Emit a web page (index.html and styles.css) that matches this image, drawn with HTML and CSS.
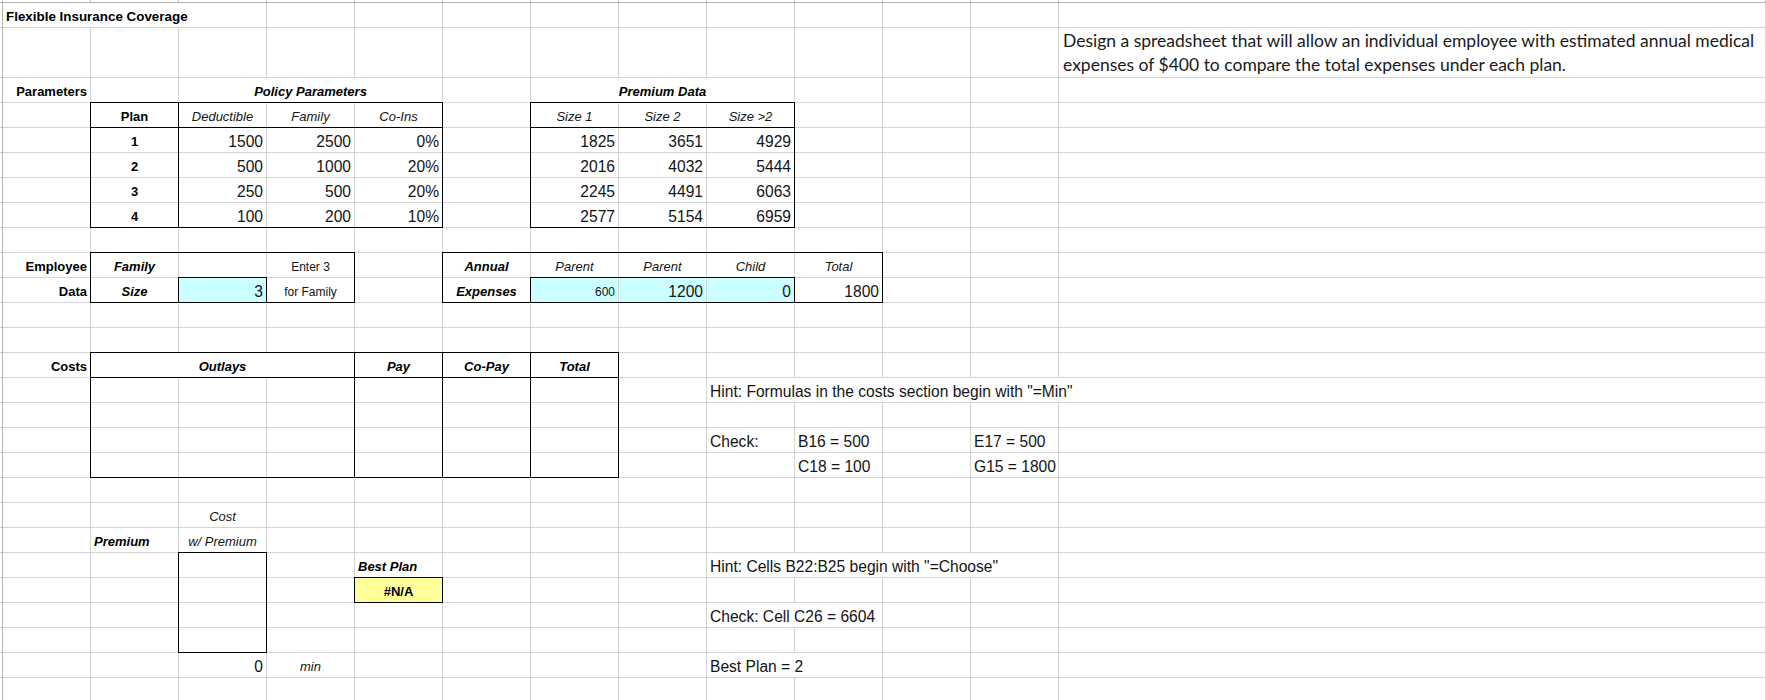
FILE: index.html
```html
<!DOCTYPE html>
<html lang="en">
<head>
<meta charset="utf-8">
<title>Flexible Insurance Coverage</title>
<link rel="stylesheet" href="styles.css">
</head>
<body>
<div class="sheet">
  <div class="cells">
    <!-- sliver of the row above -->
    <div class="top"></div><div class="top"></div><div class="top"></div><div class="top"></div><div class="top"></div><div class="top"></div><div class="top"></div><div class="top"></div><div class="top"></div><div class="top"></div><div class="top"></div><div class="top"></div><div class="top"></div><div class="top"></div>
    <!-- row 1 -->
    <div class="s"></div><div class="b title w3">Flexible Insurance Coverage</div><div></div><div></div><div></div><div></div><div></div><div></div><div></div><div></div><div></div><div></div>
    <!-- row 2 -->
    <div class="s"></div><div></div><div></div><div></div><div></div><div></div><div></div><div></div><div></div><div></div><div></div><div></div><div></div><div class="desc">Design a spreadsheet that will allow an individual employee with estimated annual medical<br>expenses of $400 to compare the total expenses under each plan.</div>
    <!-- row 3 -->
    <div class="s"></div><div class="b r">Parameters</div><div></div><div class="bi ctr w3">Policy Parameters</div><div></div><div class="bi ctr w3">Premium Data</div><div></div><div></div><div></div><div></div>
    <!-- row 4 -->
    <div class="s"></div><div></div><div class="b ctr">Plan</div><div class="i ctr">Deductible</div><div class="i ctr">Family</div><div class="i ctr">Co-Ins</div><div></div><div class="i ctr">Size 1</div><div class="i ctr">Size 2</div><div class="i ctr">Size &gt;2</div><div></div><div></div><div></div><div></div>
    <!-- row 5 -->
    <div class="s"></div><div></div><div class="b ctr">1</div><div class="r">1500</div><div class="r">2500</div><div class="r">0%</div><div></div><div class="r">1825</div><div class="r">3651</div><div class="r">4929</div><div></div><div></div><div></div><div></div>
    <!-- row 6 -->
    <div class="s"></div><div></div><div class="b ctr">2</div><div class="r">500</div><div class="r">1000</div><div class="r">20%</div><div></div><div class="r">2016</div><div class="r">4032</div><div class="r">5444</div><div></div><div></div><div></div><div></div>
    <!-- row 7 -->
    <div class="s"></div><div></div><div class="b ctr">3</div><div class="r">250</div><div class="r">500</div><div class="r">20%</div><div></div><div class="r">2245</div><div class="r">4491</div><div class="r">6063</div><div></div><div></div><div></div><div></div>
    <!-- row 8 -->
    <div class="s"></div><div></div><div class="b ctr">4</div><div class="r">100</div><div class="r">200</div><div class="r">10%</div><div></div><div class="r">2577</div><div class="r">5154</div><div class="r">6959</div><div></div><div></div><div></div><div></div>
    <!-- row 9 -->
    <div class="s"></div><div></div><div></div><div></div><div></div><div></div><div></div><div></div><div></div><div></div><div></div><div></div><div></div><div></div>
    <!-- row 10 -->
    <div class="s"></div><div class="b r">Employee</div><div class="bi ctr">Family</div><div></div><div class="sm ctr">Enter 3</div><div></div><div class="bi ctr">Annual</div><div class="i ctr">Parent</div><div class="i ctr">Parent</div><div class="i ctr">Child</div><div class="i ctr">Total</div><div></div><div></div><div></div>
    <!-- row 11 -->
    <div class="s"></div><div class="b r">Data</div><div class="bi ctr">Size</div><div class="r input">3</div><div class="sm ctr">for Family</div><div></div><div class="bi ctr">Expenses</div><div class="r input sm">600</div><div class="r input">1200</div><div class="r input">0</div><div class="r">1800</div><div></div><div></div><div></div>
    <!-- row 12 -->
    <div class="s"></div><div></div><div></div><div></div><div></div><div></div><div></div><div></div><div></div><div></div><div></div><div></div><div></div><div></div>
    <!-- row 13 -->
    <div class="s"></div><div></div><div></div><div></div><div></div><div></div><div></div><div></div><div></div><div></div><div></div><div></div><div></div><div></div>
    <!-- row 14 -->
    <div class="s"></div><div class="b r">Costs</div><div class="bi ctr w3">Outlays</div><div class="bi ctr">Pay</div><div class="bi ctr">Co-Pay</div><div class="bi ctr">Total</div><div></div><div></div><div></div><div></div><div></div><div></div>
    <!-- row 15 -->
    <div class="s"></div><div></div><div></div><div></div><div></div><div></div><div></div><div></div><div></div><div class="w5">Hint: Formulas in the costs section begin with "=Min"</div>
    <!-- row 16 -->
    <div class="s"></div><div></div><div></div><div></div><div></div><div></div><div></div><div></div><div></div><div></div><div></div><div></div><div></div><div></div>
    <!-- row 17 -->
    <div class="s"></div><div></div><div></div><div></div><div></div><div></div><div></div><div></div><div></div><div>Check:</div><div>B16 = 500</div><div></div><div>E17 = 500</div><div></div>
    <!-- row 18 -->
    <div class="s"></div><div></div><div></div><div></div><div></div><div></div><div></div><div></div><div></div><div></div><div>C18 = 100</div><div></div><div>G15 = 1800</div><div></div>
    <!-- row 19 -->
    <div class="s"></div><div></div><div></div><div></div><div></div><div></div><div></div><div></div><div></div><div></div><div></div><div></div><div></div><div></div>
    <!-- row 20 -->
    <div class="s"></div><div></div><div></div><div class="i ctr">Cost</div><div></div><div></div><div></div><div></div><div></div><div></div><div></div><div></div><div></div><div></div>
    <!-- row 21 -->
    <div class="s"></div><div></div><div class="bi">Premium</div><div class="i ctr">w/ Premium</div><div></div><div></div><div></div><div></div><div></div><div></div><div></div><div></div><div></div><div></div>
    <!-- row 22 -->
    <div class="s"></div><div></div><div></div><div></div><div></div><div class="bi">Best Plan</div><div></div><div></div><div></div><div class="w4">Hint: Cells B22:B25 begin with "=Choose"</div><div></div>
    <!-- row 23 -->
    <div class="s"></div><div></div><div></div><div></div><div></div><div class="b ctr na">#N/A</div><div></div><div></div><div></div><div></div><div></div><div></div><div></div><div></div>
    <!-- row 24 -->
    <div class="s"></div><div></div><div></div><div></div><div></div><div></div><div></div><div></div><div></div><div class="w2">Check: Cell C26 = 6604</div><div></div><div></div><div></div>
    <!-- row 25 -->
    <div class="s"></div><div></div><div></div><div></div><div></div><div></div><div></div><div></div><div></div><div></div><div></div><div></div><div></div><div></div>
    <!-- row 26 -->
    <div class="s"></div><div></div><div></div><div class="r">0</div><div class="i ctr">min</div><div></div><div></div><div></div><div></div><div class="w2">Best Plan = 2</div><div></div><div></div><div></div>
    <!-- row 27 -->
    <div class="s"></div><div></div><div></div><div></div><div></div><div></div><div></div><div></div><div></div><div></div><div></div><div></div><div></div><div></div>
  </div>
  <div class="lines">
    <div class="box pol-box"></div>
    <div class="hl pol-head"></div>
    <div class="vl pol-plan"></div>
    <div class="box prem-box"></div>
    <div class="hl prem-head"></div>
    <div class="box emp-box"></div>
    <div class="box size-box"></div>
    <div class="box exp-box"></div>
    <div class="box exp-input"></div>
    <div class="box cost-box"></div>
    <div class="hl cost-head"></div>
    <div class="vl cost-outlays"></div>
    <div class="vl cost-pay"></div>
    <div class="vl cost-copay"></div>
    <div class="box wp-box"></div>
    <div class="box best-box"></div>
  </div>
</div>
</body>
</html>
```

FILE: styles.css
```css
html, body {
  margin: 0;
  padding: 0;
  background: #fff;
  overflow: hidden;
}

.sheet {
  display: grid;
  width: 1766px;
}

.cells,
.lines {
  grid-area: 1 / 1;
  display: grid;
  grid-template-columns: 2px repeat(12, 87px) 706px;
  grid-template-rows: 2px 24px 49px repeat(25, 24px);
  gap: 1px;
  padding-right: 1px;
}

.cells {
  background: #d4d4d4;
}

.cells > div {
  background: #fff;
  display: flex;
  align-items: flex-end;
  padding: 0 3px 1px;
  min-width: 0;
  overflow: hidden;
  white-space: nowrap;
  font-family: "Liberation Sans", Arial, sans-serif;
  font-size: 15.6px;
  line-height: 1.15;
  color: #141414;
}

.cells > .top {
  padding: 0;
  box-shadow: 0 1px 0 #b3b3b3, 1px 1px 0 #b3b3b3;
}

.cells > .s {
  padding: 0;
  box-shadow: 1px 0 0 #b3b3b3, 1px 1px 0 #b3b3b3;
}

.cells > .b {
  font-weight: bold;
  font-size: 13px;
  padding-bottom: 2px;
  color: #000;
}

.cells > .title {
  font-size: 13.4px;
  padding-bottom: 2.5px;
}

.cells > .i {
  font-style: italic;
  font-size: 13px;
  padding-bottom: 2px;
}

.cells > .bi {
  font-weight: bold;
  font-style: italic;
  font-size: 13px;
  padding-bottom: 2px;
  color: #000;
}

.cells > .sm {
  font-size: 12px;
  padding-bottom: 2px;
}

.cells > .r {
  justify-content: flex-end;
}

.cells > .ctr {
  justify-content: center;
}

.cells > .input {
  background: #ccffff;
}

.cells > .na {
  background: #ffff99;
}

.cells > .desc {
  align-items: flex-start;
  padding: 1px 3px 0 4px;
  font-family: Lato, "Open Sans", sans-serif;
  font-size: 17.5px;
  line-height: 24px;
  color: #1a1a1a;
}

.w2 { grid-column: span 2; }
.w3 { grid-column: span 3; }
.w4 { grid-column: span 4; }
.w5 { grid-column: span 5; }

/* black cell borders, drawn on the gridline gaps */
.lines > div {
  pointer-events: none;
}

.box {
  border: 1px solid #000;
  margin: -1px;
}

.hl {
  border-bottom: 1px solid #000;
  margin: 0 -1px -1px;
}

.vl {
  border-right: 1px solid #000;
  margin: -1px -1px -1px 0;
}

.pol-box { grid-column: 3 / 7; grid-row: 5 / 10; }
.pol-head { grid-column: 3 / 7; grid-row: 5 / 6; }
.pol-plan { grid-column: 3 / 4; grid-row: 5 / 10; }
.prem-box { grid-column: 8 / 11; grid-row: 5 / 10; }
.prem-head { grid-column: 8 / 11; grid-row: 5 / 6; }
.emp-box { grid-column: 3 / 6; grid-row: 11 / 13; }
.size-box { grid-column: 4 / 5; grid-row: 12 / 13; }
.exp-box { grid-column: 7 / 12; grid-row: 11 / 13; }
.exp-input { grid-column: 8 / 11; grid-row: 12 / 13; }
.cost-box { grid-column: 3 / 9; grid-row: 15 / 20; }
.cost-head { grid-column: 3 / 9; grid-row: 15 / 16; }
.cost-outlays { grid-column: 3 / 6; grid-row: 15 / 20; }
.cost-pay { grid-column: 6 / 7; grid-row: 15 / 20; }
.cost-copay { grid-column: 7 / 8; grid-row: 15 / 20; }
.wp-box { grid-column: 4 / 5; grid-row: 23 / 27; }
.best-box { grid-column: 6 / 7; grid-row: 24 / 25; }
```
